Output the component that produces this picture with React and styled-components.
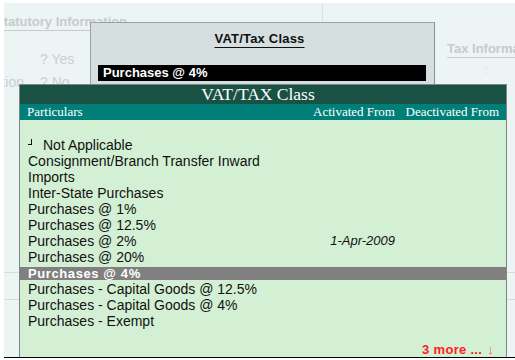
import React from 'react';
import styled, { createGlobalStyle } from 'styled-components';

const Global = createGlobalStyle`
  html, body { margin: 0; padding: 0; background: #fff; }
  body {
    width: 515px; height: 360px; overflow: hidden;
    font-family: "Liberation Sans", Arial, sans-serif;
  }
`;

const Frame = styled.div`
  box-sizing: border-box;
  width: 515px;
  height: 360px;
  padding: 3px 0 0 4px;
  background: #fff;
`;

const Screen = styled.div`
  position: relative;
  box-sizing: border-box;
  height: 355px;
  background: #edf4f4;
  border-bottom: 1px solid #000;
  overflow: hidden;
  display: flex;
  flex-direction: column;
`;

/* ---------- faded form behind the popups ---------- */
const BgForm = styled.div`
  display: grid;
  grid-template-columns: 319px 1fr;
  height: 269px;
  color: #c5cccc;
`;

const BgLeft = styled.div`
  border-right: 1px solid #dbe2e2;
  padding-top: 11px;
`;

const BgRight = styled.div`
  padding: 38px 0 0 124px;
`;

const BgHeading = styled.div`
  font-size: 13px;
  font-weight: bold;
  line-height: 16px;
  white-space: nowrap;
  margin-left: ${p => p.$shift || 0}px;
  text-decoration: underline;
  text-underline-offset: 4px;
`;

const BgRow = styled.div`
  display: grid;
  grid-template-columns: 20px auto;
  column-gap: 16px;
  font-size: 14px;
  line-height: 16px;
  margin-top: ${p => p.$gap}px;
  color: #c9d0d0;
`;

const BgLabel = styled.span`
  display: flex;
  justify-content: flex-end;
  white-space: nowrap;
`;

const BgColon = styled.div`
  margin: 6px 0 0 37px;
  font-size: 11px;
  line-height: 12px;
  color: #d3d9d9;
`;

const BgRule = styled.div`
  height: ${p => p.$h}px;
  border-top: 1px solid #d6dddd;
`;

/* ---------- VAT/Tax Class entry dialog ---------- */
const Dialog = styled.div`
  position: absolute;
  left: 86px;
  top: 19px;
  box-sizing: border-box;
  width: 345px;
  height: 80px;
  background: #d5dfdf;
  border: 1px solid #9aa3a3;
  border-right-color: #8a9292;
`;

const DialogTitle = styled.div`
  margin-top: 8px;
  padding-right: 6px;
  text-align: center;
  font-size: 13px;
  font-weight: bold;
  line-height: 16px;
  color: #111;
  letter-spacing: 0.2px;
  text-decoration: underline;
  text-decoration-thickness: 1px;
  text-underline-offset: 4px;
`;

const EntryBar = styled.div`
  margin: 18px 8px 0 7px;
  height: 16px;
  background: #000;
  color: #fff;
  font-size: 13px;
  font-weight: bold;
  line-height: 16px;
  padding-left: 5px;
`;

/* ---------- list popup ---------- */
const Panel = styled.div`
  position: absolute;
  left: 15px;
  top: 81px;
  bottom: 0;
  width: 488px;
  box-sizing: border-box;
  border: 1px solid #7d8585;
  border-bottom: none;
  display: flex;
  flex-direction: column;
`;

const TitleBar = styled.div`
  height: 19px;
  background: #1a5145;
  color: #fff;
  font-family: "Liberation Serif", "Times New Roman", serif;
  font-size: 17.5px;
  line-height: 19px;
  text-align: center;
  padding-right: 10px;
`;

const Columns = styled.div`
  display: grid;
  grid-template-columns: 1fr 90px 104px;
  padding: 0 7px 0 8px;
`;

const HeaderRow = styled(Columns)`
  height: 16px;
  background: #007f79;
  color: #fff;
  font-family: "Liberation Serif", "Times New Roman", serif;
  font-size: 13px;
  line-height: 16px;
  padding-left: 7px;
`;

const Cell = styled.span`
  white-space: nowrap;
  text-align: ${p => (p.$right ? 'right' : 'left')};
  font-style: ${p => (p.$italic ? 'italic' : 'normal')};
`;

const Body = styled.div`
  flex: 1;
  background: #d4f0d4;
  padding-top: 17px;
  display: flex;
  flex-direction: column;
`;

const Row = styled(Columns)`
  font-size: ${p => (p.$selected ? '13px' : '14px')};
  color: ${p => (p.$selected ? '#fff' : '#111')};
  font-weight: ${p => (p.$selected ? 'bold' : 'normal')};
  letter-spacing: ${p => (p.$selected ? '0.6px' : '0')};
  line-height: ${p => (p.$selected ? '13px' : '16px')};
  background: ${p => (p.$selected ? '#808080' : 'transparent')};
  background-clip: padding-box;
  border-top: ${p => (p.$selected ? '2px' : '0')} solid transparent;
  border-bottom: ${p => (p.$selected ? '1px' : '0')} solid transparent;
`;

const DateCell = styled(Cell)`
  font-size: 13px;
`;

const Mark = styled.span`
  display: inline-block;
  width: 3px;
  height: 5px;
  border-right: 1px solid #111;
  border-bottom: 1px solid #111;
  vertical-align: 5px;
  margin: 0 11px 0 0;
`;

const More = styled.div`
  margin-top: auto;
  text-align: right;
  padding-right: 12px;
  color: #ff2020;
  font-size: 13px;
  font-weight: bold;
  line-height: 14px;
  letter-spacing: 0.3px;
`;

const Arrow = styled.span`
  font-weight: normal;
  color: #ff5a5a;
  margin-left: 5px;
`;

const items = [
  { name: 'Not Applicable', mark: true },
  { name: 'Consignment/Branch Transfer Inward' },
  { name: 'Imports' },
  { name: 'Inter-State Purchases' },
  { name: 'Purchases @ 1%' },
  { name: 'Purchases @ 12.5%' },
  { name: 'Purchases @ 2%', from: '1-Apr-2009' },
  { name: 'Purchases @ 20%' },
  { name: 'Purchases @ 4%', selected: true },
  { name: 'Purchases - Capital Goods @ 12.5%' },
  { name: 'Purchases - Capital Goods @ 4%' },
  { name: 'Purchases - Exempt' },
];

export default function App() {
  return (
    <Frame>
      <Global />
      <Screen>
        <BgForm>
          <BgLeft>
            <BgHeading $shift={-9}>Statutory Information</BgHeading>
            <BgRow $gap={21}>
              <BgLabel />
              <span>? Yes</span>
            </BgRow>
            <BgRow $gap={7}>
              <BgLabel>Exemption</BgLabel>
              <span>? No</span>
            </BgRow>
          </BgLeft>
          <BgRight>
            <BgHeading>Tax Information</BgHeading>
            <BgColon>:</BgColon>
          </BgRight>
        </BgForm>
        <BgRule $h={26} />
        <BgRule $h={1} />

        <Dialog>
          <DialogTitle>VAT/Tax Class</DialogTitle>
          <EntryBar>Purchases @ 4%</EntryBar>
        </Dialog>

        <Panel>
          <TitleBar>VAT/TAX Class</TitleBar>
          <HeaderRow>
            <Cell>Particulars</Cell>
            <Cell $right>Activated From</Cell>
            <Cell $right>Deactivated From</Cell>
          </HeaderRow>
          <Body>
            {items.map(it => (
              <Row key={it.name} $selected={it.selected}>
                <Cell>
                  {it.mark && <Mark />}
                  {it.name}
                </Cell>
                <DateCell $right $italic>{it.from || ''}</DateCell>
                <Cell $right />
              </Row>
            ))}
            <More>
              3 more ...<Arrow>↓</Arrow>
            </More>
          </Body>
        </Panel>
      </Screen>
    </Frame>
  );
}
